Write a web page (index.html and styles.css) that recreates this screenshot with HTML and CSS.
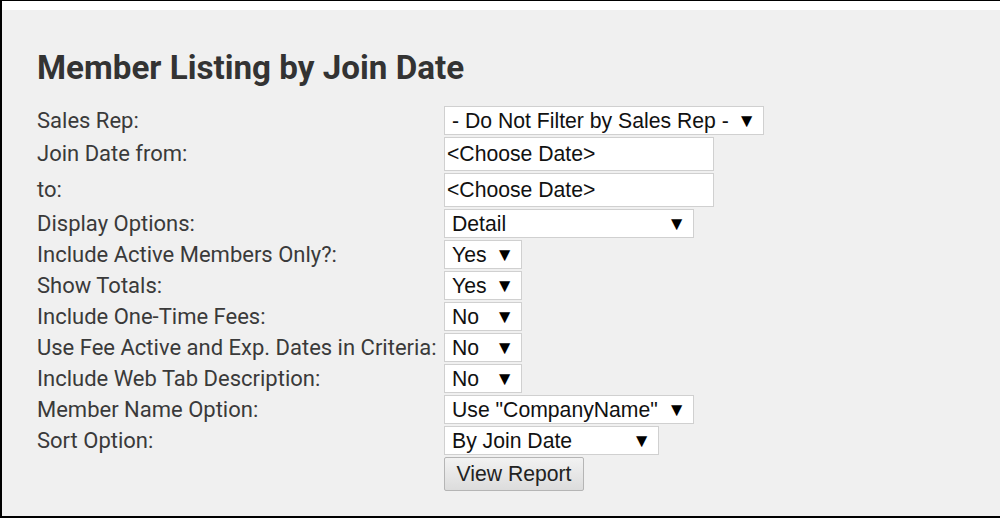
FILE: index.html
```html
<!DOCTYPE html>
<html>
<head>
<meta charset="utf-8">
<link rel="stylesheet" href="styles.css">
</head>
<body>
<div class="frame">
  <div class="topstrip"></div>
  <div class="panel">
    <h1 class="title">Member Listing by Join Date</h1>
    <form class="form">
      <label class="lbl">Sales Rep:</label>
      <div class="ctl"><span class="sel w-rep">- Do Not Filter by Sales Rep -</span></div>

      <label class="lbl">Join Date from:</label>
      <div class="ctl"><input class="date" type="text" value="&lt;Choose Date&gt;"></div>

      <label class="lbl">to:</label>
      <div class="ctl"><input class="date" type="text" value="&lt;Choose Date&gt;"></div>

      <label class="lbl">Display Options:</label>
      <div class="ctl"><span class="sel w-wide">Detail</span></div>

      <label class="lbl">Include Active Members Only?:</label>
      <div class="ctl"><span class="sel w-yn">Yes</span></div>

      <label class="lbl">Show Totals:</label>
      <div class="ctl"><span class="sel w-yn">Yes</span></div>

      <label class="lbl">Include One-Time Fees:</label>
      <div class="ctl"><span class="sel w-yn">No</span></div>

      <label class="lbl">Use Fee Active and Exp. Dates in Criteria:</label>
      <div class="ctl"><span class="sel w-yn">No</span></div>

      <label class="lbl">Include Web Tab Description:</label>
      <div class="ctl"><span class="sel w-yn">No</span></div>

      <label class="lbl">Member Name Option:</label>
      <div class="ctl"><span class="sel w-wide">Use "CompanyName"</span></div>

      <label class="lbl">Sort Option:</label>
      <div class="ctl"><span class="sel w-sort">By Join Date</span></div>

      <span class="lbl"></span>
      <div class="ctl"><button class="btn" type="button">View Report</button></div>
    </form>
  </div>
</div>
</body>
</html>
```

FILE: styles.css
```css
* { box-sizing: border-box; }
html, body { margin: 0; padding: 0; background: #ffffff; }
body { width: 1000px; height: 518px; overflow: hidden; }

.frame {
  width: 1000px;
  height: 518px;
  border-top: 1px solid #000;
  border-left: 2px solid #000;
  border-bottom: 2px solid #000;
  display: flex;
  flex-direction: column;
}
.topstrip { height: 9px; background: #fff; flex: none; }
.panel {
  flex: 1;
  background: #f0f0f0;
  padding: 0 0 0 35px;
}
.title {
  font-family: Roboto, "Liberation Sans", sans-serif;
  font-weight: 700;
  font-size: 33.2px;
  line-height: 40px;
  color: #333;
  margin: 38px 0 17px 0;
}
.form {
  display: grid;
  grid-template-columns: 407px auto;
  align-items: center;
  justify-items: start;
}
.lbl {
  font-family: Roboto, "Liberation Sans", sans-serif;
  font-size: 22px;
  color: #3a3a3a;
  line-height: 24px;
}
.ctl { padding: 1px 0; display: flex; }
.sel {
  position: relative;
  display: block;
  height: 29px;
  background: #fff;
  border: 1px solid #d0d0d0;
  font-family: "Liberation Sans", Arial, sans-serif;
  font-size: 21.2px;
  line-height: 27px;
  color: #111;
  padding: 0 0 0 7px;
}
.sel::after {
  content: "\25BC";
  position: absolute;
  right: 7px;
  top: 0;
  font-size: 19px;
  color: #000;
}
.w-rep { width: 320px; }
.w-wide { width: 250px; }
.w-yn { width: 78px; }
.w-sort { width: 215px; }
.date {
  width: 270px;
  height: 34px;
  background: #fff;
  border: 1px solid #d0d0d0;
  font-family: "Liberation Sans", Arial, sans-serif;
  font-size: 21.2px;
  color: #111;
  padding: 0 0 0 2px;
  margin: 0;
  outline: none;
}
.btn {
  width: 140px;
  height: 34px;
  margin: 0;
  border: 1px solid #b5b5b5;
  border-radius: 2px;
  background: linear-gradient(#f2f2f2, #dcdcdc);
  font-family: "Liberation Sans", Arial, sans-serif;
  font-size: 21.2px;
  color: #222;
  padding: 0;
}
```
